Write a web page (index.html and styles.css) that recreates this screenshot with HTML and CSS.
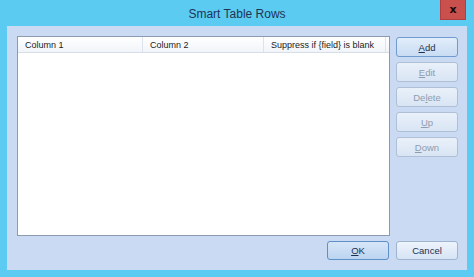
FILE: index.html
```html
<!DOCTYPE html>
<html lang="en">
<head>
	<meta charset="UTF-8">
	<meta name="viewport" content="width=device-width, initial-scale=1.0">
	<title>Smart Table Rows</title>
	<link rel="stylesheet" href="styles.css">
</head>
<body>
	<div class="window">
		<!-- Title bar -->
		<div class="titlebar">
			<span></span>
			<span class="title">Smart Table Rows</span>
			<button class="close" type="button">x</button>
		</div>

		<div class="client">
			<div class="top_row">
				<div class="listbox">
					<div class="list_header">
						<div class="col col1">Column 1</div>
						<div class="col col2">Column 2</div>
						<div class="col col3">Suppress if {field} is blank</div>
					</div>
				</div>
				<div class="side_buttons">
					<button class="btn focused" type="button"><u>A</u>dd</button>
					<button class="btn" type="button" disabled><u>E</u>dit</button>
					<button class="btn" type="button" disabled>De<u>l</u>ete</button>
					<button class="btn" type="button" disabled><u>U</u>p</button>
					<button class="btn" type="button" disabled><u>D</u>own</button>
				</div>
			</div>
			<div class="bottom_row">
				<button class="btn default" type="button"><u>O</u>K</button>
				<button class="btn" type="button">Cancel</button>
			</div>
		</div>
	</div>
</body>
</html>
```

FILE: styles.css
```css
body {
	margin: 0;
	background: #5ccbf1;
	font-family: "Liberation Sans", Arial, sans-serif;
}
.window {
	width: 474px;
	height: 277px;
	display: flex;
	flex-direction: column;
}
.titlebar {
	height: 26px;
	display: grid;
	grid-template-columns: 1fr auto 1fr;
	align-items: start;
}
.title {
	font-size: 12px;
	color: #1c3555;
	line-height: 26px;
	padding-top: 1px;
}
.close {
	justify-self: end;
	margin-right: 8px;
	width: 26px;
	height: 20px;
	border: 1px solid #b04040;
	border-top: none;
	background: #c9504c;
	color: #1a0a0a;
	font-size: 11px;
	font-weight: bold;
	font-family: "DejaVu Sans", sans-serif;
	padding: 0;
	line-height: 18px;
}
.client {
	margin: 0 7px 7px 7px;
	flex: 1;
	background: #c9daf2;
	padding: 10px 9px 0 10px;
	display: flex;
	flex-direction: column;
}
.top_row {
	display: flex;
	gap: 6px;
}
.listbox {
	width: 371px;
	height: 198px;
	background: #ffffff;
	border: 1px solid #8d9bb0;
}
.list_header {
	display: flex;
	height: 15px;
	background: linear-gradient(#ffffff, #f1f4f9);
	border-bottom: 1px solid #d6dee8;
}
.col {
	font-size: 9px;
	color: #1b1b1b;
	line-height: 16px;
	padding-left: 7px;
	box-sizing: border-box;
	border-right: 1px solid #dde3ec;
	white-space: nowrap;
}
.col1 {
	width: 125px;
}
.col2 {
	width: 121px;
}
.col3 {
	width: 122px;
}
.side_buttons {
	display: flex;
	flex-direction: column;
	gap: 5px;
	padding-top: 1px;
}
.btn {
	width: 62px;
	height: 20px;
	padding: 0;
	font-family: "Liberation Sans", Arial, sans-serif;
	font-size: 9.5px;
	color: #1c3050;
	border: 1px solid #9fb4cf;
	border-radius: 3px;
	background: linear-gradient(#eef4fc, #d6e4f5);
}
.btn:disabled {
	color: #8e9cb0;
	border-color: #aebfd6;
	background: linear-gradient(#e9f0f9, #d9e5f4);
}
.btn.focused {
	border-color: #6f9bd0;
	background: linear-gradient(#e2edfa, #c8dcf3);
}
.btn.default {
	border-color: #5d8fc9;
	background: linear-gradient(#d6e6f8, #bcd4f0);
}
.bottom_row {
	display: flex;
	justify-content: flex-end;
	gap: 7px;
	margin-top: 5px;
}
.bottom_row .btn {
	height: 19px;
}
```
